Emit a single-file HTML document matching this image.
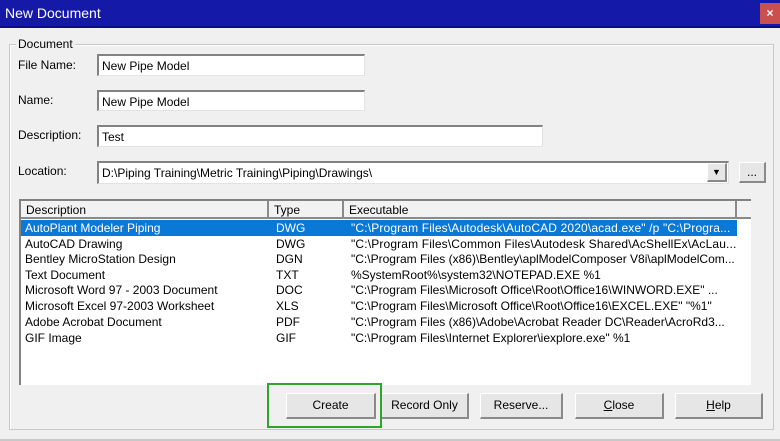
<!DOCTYPE html>
<html><head><style>
body{margin:0;width:780px;height:441px;background:#f0f0f0;font-family:"Liberation Sans",Arial,sans-serif;font-size:12px;color:#000;position:relative;overflow:hidden}
.a{position:absolute}
.title{left:0;top:0;width:780px;height:26px;background:#1419a8;border-bottom:2px solid #0c0f80;color:#fff;font-size:14px}
.inp{background:#fff;border-top:2px solid #828282;border-left:2px solid #828282;border-bottom:1px solid #e3e3e3;border-right:1px solid #e3e3e3;box-sizing:border-box;padding:3px 3px;white-space:nowrap}
.btn{box-sizing:border-box;background:#e6e6e6;border:1px solid #fff;border-right:2px solid #8a8a8a;border-bottom:2px solid #8a8a8a;text-align:center;line-height:22px}
.row{position:absolute;left:0;height:16px;line-height:16px;white-space:nowrap}
.row span{position:absolute}
</style></head><body>
<div class="a title"><span style="position:absolute;left:5px;top:5px">New Document</span>
<div class="a" style="left:760px;top:3px;width:20px;height:21px;background:#c9504f;color:#fff;text-align:center;line-height:21px;font-size:12px;font-weight:bold">×</div></div>
<div class="a" style="left:9px;top:44px;width:763px;height:384px;border:1px solid #c8c8c8;box-shadow:1px 1px 0 #fff inset"></div>
<div class="a" style="left:16px;top:37px;background:#f0f0f0;padding:0 2px">Document</div>
<div class="a" style="left:18px;top:58px">File Name:</div>
<div class="a" style="left:18px;top:93px">Name:</div>
<div class="a" style="left:18px;top:128px">Description:</div>
<div class="a" style="left:18px;top:164px">Location:</div>
<div class="a inp" style="left:97px;top:54px;width:268px;height:22px">New Pipe Model</div>
<div class="a inp" style="left:97px;top:90px;width:268px;height:21px">New Pipe Model</div>
<div class="a inp" style="left:97px;top:125px;width:446px;height:22px">Test</div>
<div class="a inp" style="left:97px;top:161px;width:632px;height:23px">D:\Piping Training\Metric Training\Piping\Drawings\</div>
<div class="a btn" style="left:707px;top:163px;width:20px;height:19px;line-height:17px;font-size:9px">▼</div>
<div class="a btn" style="left:739px;top:162px;width:27px;height:21px;line-height:18px">...</div>
<div class="a" style="left:19px;top:199px;width:732px;height:186px;background:#fff;border-top:2px solid #828282;border-left:2px solid #828282;box-sizing:border-box;overflow:hidden">
 <div class="a" style="left:0;top:0;width:248px;height:18px;border-right:2px solid #8a8a8a;border-bottom:2px solid #8a8a8a;background:#f2f2f2;box-sizing:border-box;padding:2px 5px">Description</div>
 <div class="a" style="left:248px;top:0;width:75px;height:18px;border-right:2px solid #8a8a8a;border-bottom:2px solid #8a8a8a;background:#f2f2f2;box-sizing:border-box;padding:2px 5px">Type</div>
 <div class="a" style="left:323px;top:0;width:393px;height:18px;border-right:2px solid #8a8a8a;border-bottom:2px solid #8a8a8a;background:#f2f2f2;box-sizing:border-box;padding:2px 5px">Executable</div>
 <div class="a" style="left:716px;top:0;width:20px;height:18px;border-bottom:2px solid #8a8a8a;background:#f2f2f2;box-sizing:border-box"></div>
 <div class="row" style="top:19px;width:716px;background:#0a78d7;color:#fff"><span style="left:4px">AutoPlant Modeler Piping</span><span style="left:255px">DWG</span><span style="left:330px;letter-spacing:0.15px">"C:\Program Files\Autodesk\AutoCAD 2020\acad.exe" /p "C:\Progra...</span></div>
 <div class="row" style="top:35px"><span style="left:4px">AutoCAD Drawing</span><span style="left:255px">DWG</span><span style="left:330px;letter-spacing:0.15px">"C:\Program Files\Common Files\Autodesk Shared\AcShellEx\AcLau...</span></div>
 <div class="row" style="top:50px"><span style="left:4px">Bentley MicroStation Design</span><span style="left:255px">DGN</span><span style="left:330px">"C:\Program Files (x86)\Bentley\aplModelComposer V8i\aplModelCom...</span></div>
 <div class="row" style="top:66px"><span style="left:4px">Text Document</span><span style="left:255px">TXT</span><span style="left:330px">%SystemRoot%\system32\NOTEPAD.EXE %1</span></div>
 <div class="row" style="top:81px"><span style="left:4px">Microsoft Word 97 - 2003 Document</span><span style="left:255px">DOC</span><span style="left:330px">"C:\Program Files\Microsoft Office\Root\Office16\WINWORD.EXE" ...</span></div>
 <div class="row" style="top:97px"><span style="left:4px">Microsoft Excel 97-2003 Worksheet</span><span style="left:255px">XLS</span><span style="left:330px">"C:\Program Files\Microsoft Office\Root\Office16\EXCEL.EXE" "%1"</span></div>
 <div class="row" style="top:113px"><span style="left:4px">Adobe Acrobat Document</span><span style="left:255px">PDF</span><span style="left:330px">"C:\Program Files (x86)\Adobe\Acrobat Reader DC\Reader\AcroRd3...</span></div>
 <div class="row" style="top:129px"><span style="left:4px">GIF Image</span><span style="left:255px">GIF</span><span style="left:330px">"C:\Program Files\Internet Explorer\iexplore.exe" %1</span></div>
</div>
<div class="a btn" style="left:286px;top:393px;width:90px;height:26px">Create</div>
<div class="a btn" style="left:381px;top:393px;width:88px;height:26px">Record Only</div>
<div class="a btn" style="left:480px;top:393px;width:83px;height:26px">Reserve...</div>
<div class="a btn" style="left:575px;top:393px;width:89px;height:26px"><u>C</u>lose</div>
<div class="a btn" style="left:675px;top:393px;width:88px;height:26px"><u>H</u>elp</div>
<div class="a" style="left:267px;top:383px;width:115px;height:45px;border:2px solid #2fa52f;box-sizing:border-box"></div>
<div class="a" style="left:0;top:439px;width:780px;height:2px;background:#c8c8c8"></div>
</body></html>
